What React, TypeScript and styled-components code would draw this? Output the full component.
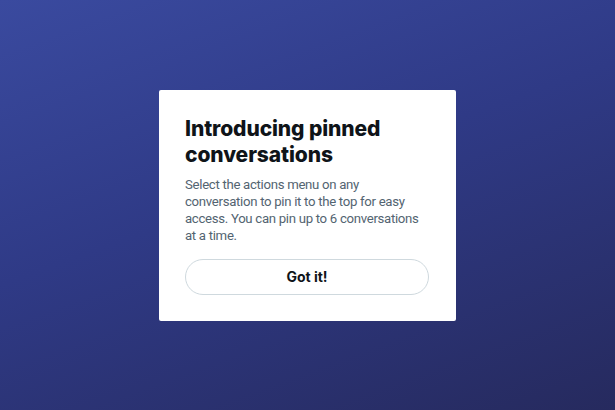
import React from 'react';
import styled, { createGlobalStyle } from 'styled-components';

const GlobalStyle = createGlobalStyle`
  html, body, #root {
    margin: 0;
    padding: 0;
    height: 100%;
  }
  body {
    font-family: Inter, "Noto Sans", "Liberation Sans", sans-serif;
  }
`;

const Backdrop = styled.div`
  height: 100vh;
  display: flex;
  align-items: center;
  justify-content: center;
  background: linear-gradient(160deg, #3a4a9f 0%, #2f3a86 45%, #262a5e 100%);
`;

const Card = styled.div`
  width: 297px;
  box-sizing: border-box;
  padding: 26px 27px 26px 26px;
  background: #ffffff;
  border-radius: 2px;
  display: flex;
  flex-direction: column;
`;

const Title = styled.h2`
  margin: 0;
  font-size: 21px;
  line-height: 26px;
  font-weight: 800;
  color: #0f1419;
  letter-spacing: -0.1px;
`;

const Body = styled.p`
  margin: 8px 0 0;
  font-family: Roboto, "Liberation Sans", sans-serif;
  font-size: 13.2px;
  line-height: 17px;
  letter-spacing: -0.3px;
  color: #536471;
`;

const GotIt = styled.button`
  margin-top: 15px;
  height: 36px;
  width: 100%;
  border: 1px solid #cfd9de;
  border-radius: 18px;
  background: #ffffff;
  font-family: inherit;
  font-size: 14px;
  font-weight: 700;
  color: #0f1419;
  cursor: pointer;
`;

const App: React.FC = () => {
  return (
    <>
      <GlobalStyle />
      <Backdrop>
        <Card>
          <Title>Introducing pinned conversations</Title>
          <Body>
            Select the actions menu on any conversation to pin it to the top for easy
            access. You can pin up to 6 conversations at a time.
          </Body>
          <GotIt>Got it!</GotIt>
        </Card>
      </Backdrop>
    </>
  );
};

export default App;
